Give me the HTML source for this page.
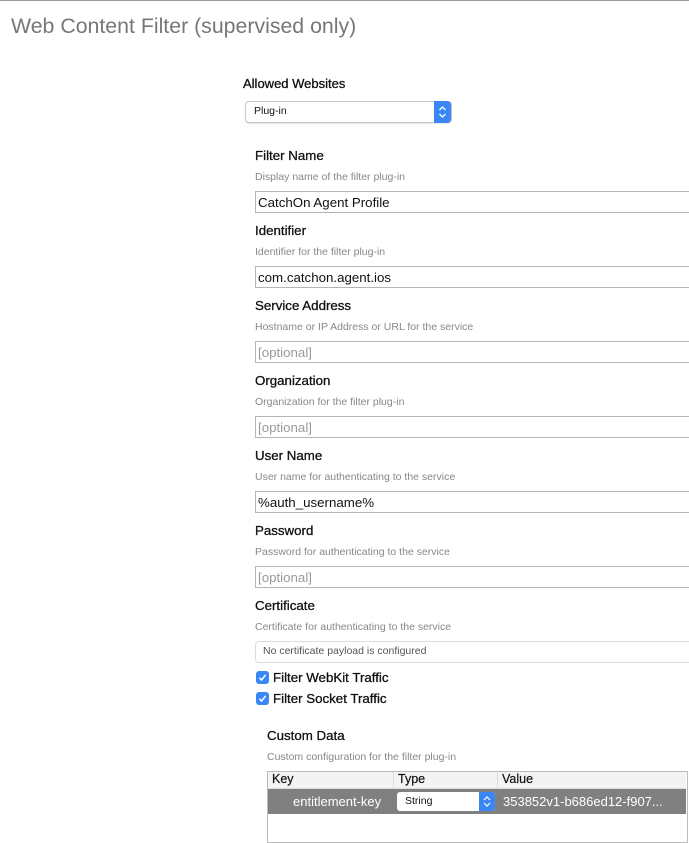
<!DOCTYPE html>
<html><head><meta charset="utf-8"><style>
body{margin:0;width:689px;height:835px;background:#fff;font-family:"Liberation Sans",sans-serif;position:relative;overflow:hidden}
.a{position:absolute;white-space:nowrap}
.lbl{font-size:13.3px;color:#111;left:255px;-webkit-text-stroke:0.3px #111}
.desc{font-size:10.5px;color:#888;left:255px}
.inp{position:absolute;left:255px;width:440px;height:20px;border:1px solid #b5b5b5;box-sizing:content-box;font-size:13.3px;line-height:21px;padding-left:2px;color:#111}
.ph{color:#999}
.cb{position:absolute;left:256px;width:13px;height:13px;background:#3b87f5;border-radius:3px}
</style></head><body>
<div class="a" style="left:0;top:0;width:689px;height:1px;background:#999"></div>
<div class="a" style="left:11px;top:14px;font-size:21.3px;color:#777">Web Content Filter (supervised only)</div>
<div class="a" style="left:243px;top:76px;font-size:13px;color:#111;-webkit-text-stroke:0.3px #111">Allowed Websites</div>
<div class="a" style="left:245px;top:101px;width:205px;height:20px;border:1px solid #c6c6c6;border-radius:4px;box-shadow:0 1px 1px rgba(0,0,0,.1)"></div>
<div class="a" style="left:254px;top:105px;font-size:10.5px;color:#111">Plug-in</div>
<svg class="a" style="left:434px;top:101px" width="17" height="22"><rect width="17" height="22" rx="4" fill="#3a86f4"/><rect width="6" height="22" fill="#3a86f4"/><path d="M5.5 9L8.5 6L11.5 9M5.5 13L8.5 16L11.5 13" stroke="#fff" stroke-width="1.3" fill="none"/></svg>

<div class="a lbl" style="top:148px">Filter Name</div>
<div class="a desc" style="top:171px">Display name of the filter plug-in</div>
<div class="inp" style="top:191px">CatchOn Agent Profile</div>

<div class="a lbl" style="top:223px">Identifier</div>
<div class="a desc" style="top:246px">Identifier for the filter plug-in</div>
<div class="inp" style="top:266px">com.catchon.agent.ios</div>

<div class="a lbl" style="top:298px">Service Address</div>
<div class="a desc" style="top:321px">Hostname or IP Address or URL for the service</div>
<div class="inp ph" style="top:341px">[optional]</div>

<div class="a lbl" style="top:373px">Organization</div>
<div class="a desc" style="top:396px">Organization for the filter plug-in</div>
<div class="inp ph" style="top:416px">[optional]</div>

<div class="a lbl" style="top:448px">User Name</div>
<div class="a desc" style="top:471px">User name for authenticating to the service</div>
<div class="inp" style="top:491px">%auth_username%</div>

<div class="a lbl" style="top:523px">Password</div>
<div class="a desc" style="top:546px">Password for authenticating to the service</div>
<div class="inp ph" style="top:566px">[optional]</div>

<div class="a lbl" style="top:598px">Certificate</div>
<div class="a desc" style="top:621px">Certificate for authenticating to the service</div>
<div class="a" style="left:255px;top:641px;width:450px;height:20px;border:1px solid #ddd;border-radius:4px"></div>
<div class="a" style="left:263px;top:645px;font-size:10.5px;color:#555">No certificate payload is configured</div>

<svg class="a" style="left:256px;top:671px" width="13" height="13"><rect width="13" height="13" rx="3" fill="#3b87f5"/><path d="M3.5 6.8L5.6 9L9.6 3.8" stroke="#fff" stroke-width="1.5" fill="none"/></svg>
<div class="a" style="left:273px;top:670px;font-size:13.3px;color:#111;-webkit-text-stroke:0.3px #111">Filter WebKit Traffic</div>
<svg class="a" style="left:256px;top:692px" width="13" height="13"><rect width="13" height="13" rx="3" fill="#3b87f5"/><path d="M3.5 6.8L5.6 9L9.6 3.8" stroke="#fff" stroke-width="1.5" fill="none"/></svg>
<div class="a" style="left:273px;top:691px;font-size:13.3px;color:#111;-webkit-text-stroke:0.3px #111">Filter Socket Traffic</div>

<div class="a" style="left:267px;top:728px;font-size:13.3px;color:#111;-webkit-text-stroke:0.3px #111">Custom Data</div>
<div class="a" style="left:267px;top:751px;font-size:10.5px;color:#888">Custom configuration for the filter plug-in</div>
<div class="a" style="left:267px;top:771px;width:419px;height:70px;border:1px solid #bbb;background:#fff"></div>
<div class="a" style="left:268px;top:772px;width:418px;height:16px;background:#f3f3f3;border-bottom:1px solid #ddd"></div>
<div class="a" style="left:393px;top:772px;width:1px;height:16px;background:#ddd"></div>
<div class="a" style="left:497px;top:772px;width:1px;height:16px;background:#ddd"></div>
<div class="a" style="left:272px;top:772px;font-size:12.5px;color:#111;-webkit-text-stroke:0.2px #111">Key</div>
<div class="a" style="left:398px;top:772px;font-size:12.5px;color:#111;-webkit-text-stroke:0.2px #111">Type</div>
<div class="a" style="left:502px;top:772px;font-size:12.5px;color:#111;-webkit-text-stroke:0.2px #111">Value</div>
<div class="a" style="left:268px;top:789px;width:418px;height:25px;background:#808080"></div>
<div class="a" style="left:293px;top:794px;font-size:13px;color:#fff">entitlement-key</div>
<div class="a" style="left:397px;top:792px;width:98px;height:19px;background:#fff;border-radius:3px"></div>
<div class="a" style="left:405px;top:795px;font-size:10.5px;color:#111">String</div>
<svg class="a" style="left:479px;top:792px" width="16" height="19"><rect width="16" height="19" rx="3" fill="#3a86f4"/><rect width="5" height="19" fill="#3a86f4"/><path d="M5 8L8 5L11 8M5 11L8 14L11 11" stroke="#fff" stroke-width="1.2" fill="none"/></svg>
<div class="a" style="left:503px;top:794px;font-size:13px;color:#fff">353852v1-b686ed12-f907...</div>
</body></html>
